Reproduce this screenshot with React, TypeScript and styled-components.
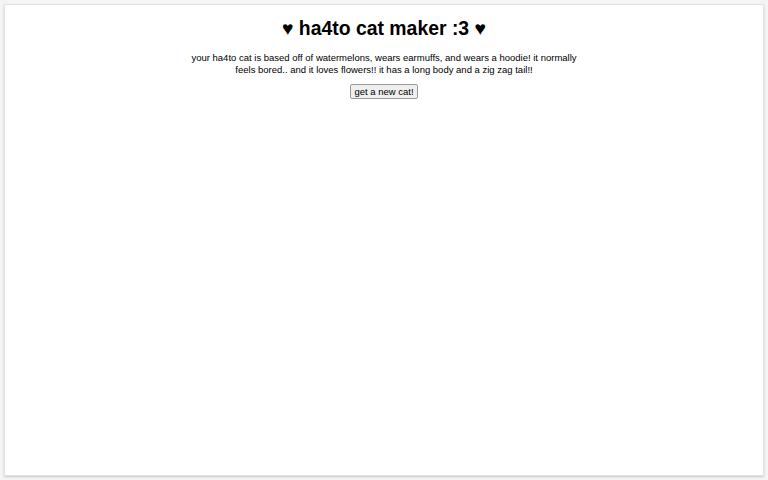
import React, { useState } from 'react';
import styled, { createGlobalStyle } from 'styled-components';

const GlobalStyle = createGlobalStyle`
  html, body {
    margin: 0;
    padding: 0;
    background: #f4f4f4;
    font-family: "Liberation Sans", Arial, sans-serif;
  }
`;

const Card = styled.main`
  box-sizing: border-box;
  margin: 4px;
  height: calc(100vh - 8px);
  background: #fff;
  border: 1px solid #e2e2e2;
  box-shadow: 0 1px 2px rgba(0, 0, 0, 0.18);
  display: flex;
  flex-direction: column;
  align-items: center;
  color: #000;
`;

const Title = styled.h1`
  margin: 12px 0 0;
  font-size: 19.4px;
  font-weight: bold;
  line-height: 22px;
  text-align: center;
`;

const Description = styled.p`
  margin: 13px 0 0;
  max-width: 400px;
  font-size: 9.5px;
  line-height: 12px;
  text-align: center;
`;

const NewCatButton = styled.button`
  margin-top: 8px;
  padding: 1px 3px;
  font-family: "Liberation Sans", Arial, sans-serif;
  font-size: 9.5px;
  line-height: 11px;
  color: #000;
  background: #efefef;
  border: 1px solid #9a9a9a;
  border-radius: 2px;
  cursor: pointer;
`;

const cats = [
  'your ha4to cat is based off of watermelons, wears earmuffs, and wears a hoodie! it normally feels bored.. and it loves flowers!! it has a long body and a zig zag tail!!',
];

export default function App() {
  const [index] = useState(0);
  return (
    <>
      <GlobalStyle />
      <Card>
        <Title>♥ ha4to cat maker :3 ♥</Title>
        <Description>{cats[index]}</Description>
        <NewCatButton>get a new cat!</NewCatButton>
      </Card>
    </>
  );
}
